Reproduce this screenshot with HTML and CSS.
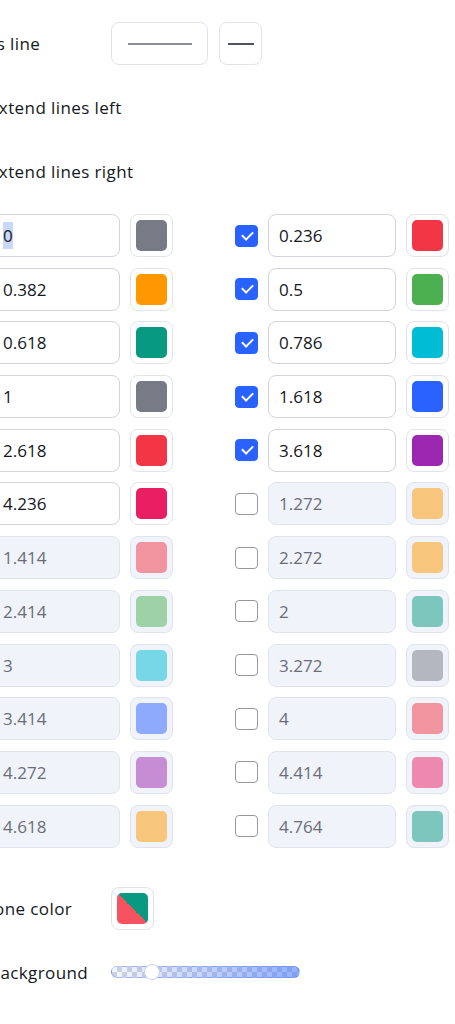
FILE: index.html
```html
<!DOCTYPE html>
<html>
<head>
<meta charset="utf-8">
<link rel="stylesheet" href="styles.css">
</head>
<body>
<div class="settings">
  <div class="row">
    <div class="label">Levels line</div>
    <div class="controls">
      <div class="btn btn-wide"><span class="line line-long"></span></div>
      <div class="btn btn-sq"><span class="line line-short"></span></div>
    </div>
  </div>
  <div class="row">
    <div class="label"><span class="cb on"></span><span>Extend lines left</span></div>
  </div>
  <div class="row">
    <div class="label"><span class="cb on"></span><span>Extend lines right</span></div>
  </div>

  <div class="levels">
    <div class="lv"><span class="cb on"></span><div class="inp"><span class="sel">0</span></div><div class="swbtn"><span class="sw" style="background:#787b86"></span></div></div>
    <div class="lv"><span class="cb on"></span><div class="inp">0.236</div><div class="swbtn"><span class="sw" style="background:#f23645"></span></div></div>

    <div class="lv"><span class="cb on"></span><div class="inp">0.382</div><div class="swbtn"><span class="sw" style="background:#ff9800"></span></div></div>
    <div class="lv"><span class="cb on"></span><div class="inp">0.5</div><div class="swbtn"><span class="sw" style="background:#4caf50"></span></div></div>

    <div class="lv"><span class="cb on"></span><div class="inp">0.618</div><div class="swbtn"><span class="sw" style="background:#089981"></span></div></div>
    <div class="lv"><span class="cb on"></span><div class="inp">0.786</div><div class="swbtn"><span class="sw" style="background:#00bcd4"></span></div></div>

    <div class="lv"><span class="cb on"></span><div class="inp">1</div><div class="swbtn"><span class="sw" style="background:#787b86"></span></div></div>
    <div class="lv"><span class="cb on"></span><div class="inp">1.618</div><div class="swbtn"><span class="sw" style="background:#2962ff"></span></div></div>

    <div class="lv"><span class="cb on"></span><div class="inp">2.618</div><div class="swbtn"><span class="sw" style="background:#f23645"></span></div></div>
    <div class="lv"><span class="cb on"></span><div class="inp">3.618</div><div class="swbtn"><span class="sw" style="background:#9c27b0"></span></div></div>

    <div class="lv"><span class="cb on"></span><div class="inp">4.236</div><div class="swbtn"><span class="sw" style="background:#e91e63"></span></div></div>
    <div class="lv off"><span class="cb"></span><div class="inp">1.272</div><div class="swbtn"><span class="sw" style="background:#ff9800"></span></div></div>

    <div class="lv off"><span class="cb"></span><div class="inp">1.414</div><div class="swbtn"><span class="sw" style="background:#f23645"></span></div></div>
    <div class="lv off"><span class="cb"></span><div class="inp">2.272</div><div class="swbtn"><span class="sw" style="background:#ff9800"></span></div></div>

    <div class="lv off"><span class="cb"></span><div class="inp">2.414</div><div class="swbtn"><span class="sw" style="background:#4caf50"></span></div></div>
    <div class="lv off"><span class="cb"></span><div class="inp">2</div><div class="swbtn"><span class="sw" style="background:#089981"></span></div></div>

    <div class="lv off"><span class="cb"></span><div class="inp">3</div><div class="swbtn"><span class="sw" style="background:#00bcd4"></span></div></div>
    <div class="lv off"><span class="cb"></span><div class="inp">3.272</div><div class="swbtn"><span class="sw" style="background:#787b86"></span></div></div>

    <div class="lv off"><span class="cb"></span><div class="inp">3.414</div><div class="swbtn"><span class="sw" style="background:#2962ff"></span></div></div>
    <div class="lv off"><span class="cb"></span><div class="inp">4</div><div class="swbtn"><span class="sw" style="background:#f23645"></span></div></div>

    <div class="lv off"><span class="cb"></span><div class="inp">4.272</div><div class="swbtn"><span class="sw" style="background:#9c27b0"></span></div></div>
    <div class="lv off"><span class="cb"></span><div class="inp">4.414</div><div class="swbtn"><span class="sw" style="background:#e91e63"></span></div></div>

    <div class="lv off"><span class="cb"></span><div class="inp">4.618</div><div class="swbtn"><span class="sw" style="background:#ff9800"></span></div></div>
    <div class="lv off"><span class="cb"></span><div class="inp">4.764</div><div class="swbtn"><span class="sw" style="background:#089981"></span></div></div>
  </div>

  <div class="row row-onecolor">
    <div class="label label-shift">Use one color</div>
    <div class="controls">
      <div class="swbtn"><span class="sw sw-split"></span></div>
    </div>
  </div>
  <div class="row">
    <div class="label"><span class="cb on"></span><span>Background</span></div>
    <div class="controls">
      <div class="slider"><span class="thumb"></span></div>
    </div>
  </div>
</div>
</body>
</html>
```

FILE: styles.css
```css
html, body {
  margin: 0;
  padding: 0;
  background: #ffffff;
  overflow: hidden;
}

body {
  font-family: "Open Sans", "Noto Sans", sans-serif;
  font-size: 17px;
  color: #131722;
}

.settings {
  margin-left: -46px;
  padding-top: 22px;
  display: flex;
  flex-direction: column;
  gap: 21px;
}

.row {
  display: flex;
  align-items: center;
  height: 43px;
}

.row-onecolor {
  margin-top: 18px;
}

.label {
  width: 157px;
  flex: none;
  display: flex;
  align-items: center;
  gap: 12px;
  white-space: nowrap;
  letter-spacing: 0.4px;
}

.label-shift {
  box-sizing: border-box;
  padding-left: 4px;
}

.controls {
  display: flex;
  align-items: center;
  gap: 11px;
}

.btn {
  box-sizing: border-box;
  height: 43px;
  border: 1px solid #e0e3eb;
  border-radius: 8px;
  background: #fff;
  display: flex;
  align-items: center;
  justify-content: center;
}

.btn-wide { width: 97px; }
.btn-sq { width: 43px; }

.line {
  display: block;
  height: 2px;
}
.line-long { width: 64px; background: #8b8e98; }
.line-short { width: 26px; background: #50535e; }

.cb {
  box-sizing: border-box;
  width: 23px;
  height: 22px;
  flex: none;
  border: 1px solid #9598a1;
  border-radius: 4px;
  background: #fff;
  position: relative;
}

.cb.on {
  background: #2962ff;
  border-color: #2962ff;
}

.cb.on::after {
  content: "";
  position: absolute;
  left: 6px;
  top: 5px;
  width: 9px;
  height: 5px;
  border-left: 2px solid #fff;
  border-bottom: 2px solid #fff;
  transform: rotate(-45deg);
}

.levels {
  margin-left: 5px;
  display: grid;
  grid-template-columns: auto auto;
  column-gap: 62px;
  row-gap: 10.7px;
  justify-content: start;
}

.lv {
  display: flex;
  align-items: center;
  gap: 10px;
  height: 43px;
}

.inp {
  box-sizing: border-box;
  width: 128px;
  height: 43px;
  padding: 0 10px;
  border: 1px solid #d1d4dc;
  border-radius: 8px;
  background: #fff;
  display: flex;
  align-items: center;
  font-family: "Open Sans", "Noto Sans", sans-serif;
  font-size: 17px;
  color: #131722;
}

.sel {
  background: #c9d8f6;
  padding: 2px 0;
}

.swbtn {
  box-sizing: border-box;
  width: 43px;
  height: 43px;
  flex: none;
  border: 1px solid #e0e3eb;
  border-radius: 8px;
  background: #fff;
  display: flex;
  align-items: center;
  justify-content: center;
}

.sw {
  display: block;
  width: 31px;
  height: 31px;
  border-radius: 5px;
}

.sw-split {
  background: linear-gradient(to top right, #f7525f 50%, #089981 50%);
}

.lv.off .inp {
  background: #f0f3fa;
  border-color: #e0e3eb;
  color: #6a6d78;
}

.lv.off .swbtn {
  background: #f0f3fa;
}

.lv.off .sw {
  opacity: 0.5;
}

.slider {
  position: relative;
  box-sizing: border-box;
  width: 189px;
  height: 12px;
  border-radius: 6px;
  border: 1px solid rgba(41, 98, 255, 0.25);
  background:
    linear-gradient(to right, rgba(41, 98, 255, 0.05) 0%, rgba(41, 98, 255, 0.5) 100%),
    conic-gradient(#d6d8de 25%, #ffffff 0 50%, #d6d8de 0 75%, #ffffff 0) 0 0 / 10px 10px;
}

.thumb {
  position: absolute;
  left: 32px;
  top: -3px;
  width: 16px;
  height: 16px;
  box-sizing: border-box;
  border-radius: 50%;
  background: #fff;
  border: 1px solid #d1d4dc;
}
```
